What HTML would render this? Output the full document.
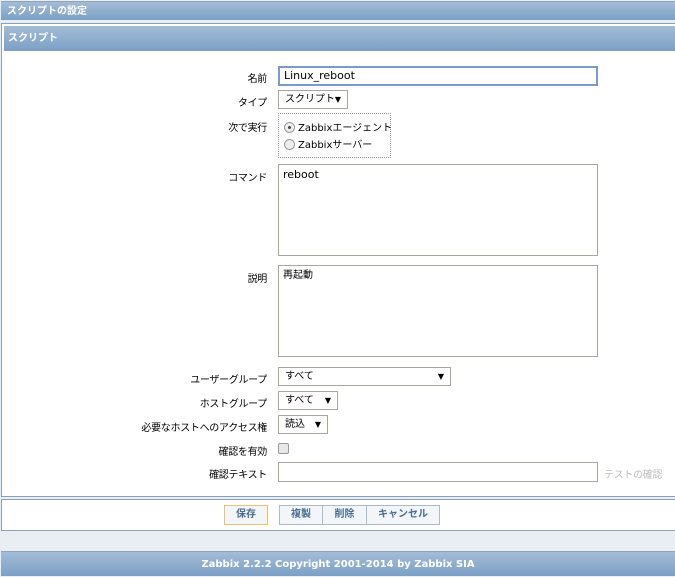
<!DOCTYPE html>
<html><head><meta charset="utf-8"><style>
*{margin:0;padding:0;box-sizing:border-box}
body{width:675px;height:576px;background:#e9eef2;position:relative;overflow:hidden;font-family:"DejaVu Sans","Noto Sans CJK JP",sans-serif;font-size:10px;color:#000}
.a{position:absolute}
.bar{background:linear-gradient(#a4bcd6,#7ba0c5);color:#fff;font-weight:bold;font-size:10px}
.lbl{position:absolute;right:408px;text-align:right;white-space:nowrap;letter-spacing:-0.3px}
.in{position:absolute;background:#fff;border:1px solid #aaa69b;padding-left:6px;line-height:18px;white-space:nowrap}
.sel{position:absolute;background:#fff;border:1px solid #aaa69b;padding-left:6px;line-height:17px;white-space:nowrap}
.sel span{position:absolute;right:6px;top:0;font-size:8px}
.btn{position:absolute;border:1px solid #a9bccd;background:#f2f6f9;color:#4a6d93;font-weight:bold;text-align:center;line-height:18px}
.rad{display:inline-block;width:11px;height:11px;border-radius:50%;border:1px solid #999;background:#eee;vertical-align:-2px;margin-right:3px;position:relative}
</style></head><body>
<div class="a bar" style="left:1px;top:1px;width:674px;height:19px;line-height:19px;padding-left:6px;border-top:1px solid #8ca3bb">スクリプトの設定</div>
<div class="a" style="left:1px;top:23px;width:680px;height:474px;background:#fff;border:1px solid #8aa0b7"></div>
<div class="a bar" style="left:4px;top:26px;width:671px;height:25px;line-height:25px;padding-left:4px">スクリプト</div>

<div class="lbl" style="top:70px">名前</div>
<div class="in" style="left:278px;top:66px;width:320px;height:20px;border:2px solid #7c9bcc;padding-left:4px;line-height:16px;font-size:11px">Linux_reboot</div>
<div class="lbl" style="top:94px">タイプ</div>
<div class="sel" style="left:278px;top:90px;width:70px;height:19px">スクリプト<span>▼</span></div>
<div class="lbl" style="top:119px">次で実行</div>
<div class="a" style="left:278px;top:113px;width:113px;height:45px;border:1px dotted #8a93a0;padding:6px 0 0 5px;line-height:17px;white-space:nowrap">
<div><span class="rad"><span class="a" style="left:3px;top:3px;width:3px;height:3px;background:#444;border-radius:50%"></span></span>Zabbixエージェント</div>
<div><span class="rad"></span>Zabbixサーバー</div></div>
<div class="lbl" style="top:169px">コマンド</div>
<div class="in" style="left:278px;top:164px;width:320px;height:92px;line-height:20px;padding-left:4px;font-size:11px">reboot</div>
<div class="lbl" style="top:270px">説明</div>
<div class="in" style="left:278px;top:265px;width:320px;height:92px;line-height:20px;padding-left:4px">再起動</div>
<div class="lbl" style="top:371px">ユーザーグループ</div>
<div class="sel" style="left:278px;top:367px;width:173px;height:19px">すべて<span>▼</span></div>
<div class="lbl" style="top:395px">ホストグループ</div>
<div class="sel" style="left:278px;top:391px;width:60px;height:19px">すべて<span>▼</span></div>
<div class="lbl" style="top:419px">必要なホストへのアクセス権</div>
<div class="sel" style="left:278px;top:415px;width:50px;height:19px">読込<span>▼</span></div>
<div class="lbl" style="top:443px">確認を有効</div>
<div class="a" style="left:278px;top:443px;width:11px;height:11px;border:1px solid #999;border-radius:2px;background:#e8e8e8"></div>
<div class="lbl" style="top:466px">確認テキスト</div>
<div class="in" style="left:278px;top:462px;width:320px;height:20px"></div>
<div class="a" style="left:604px;top:466px;color:#bbb;letter-spacing:-0.3px">テストの確認</div>

<div class="a" style="left:1px;top:499px;width:680px;height:32px;background:#fff;border:1px solid #8aa0b7"></div>
<div class="btn" style="left:224px;top:505px;width:44px;height:20px;border-color:#f0c070">保存</div>
<div class="btn" style="left:279px;top:505px;width:44px;height:20px">複製</div>
<div class="btn" style="left:322px;top:505px;width:45px;height:20px">削除</div>
<div class="btn" style="left:366px;top:505px;width:74px;height:20px">キャンセル</div>

<div class="a bar" style="left:1px;top:551px;width:674px;height:25px;line-height:25px;text-align:center;border-top:1px solid #8ca3bb">Zabbix 2.2.2 Copyright 2001-2014 by Zabbix SIA</div>
</body></html>
